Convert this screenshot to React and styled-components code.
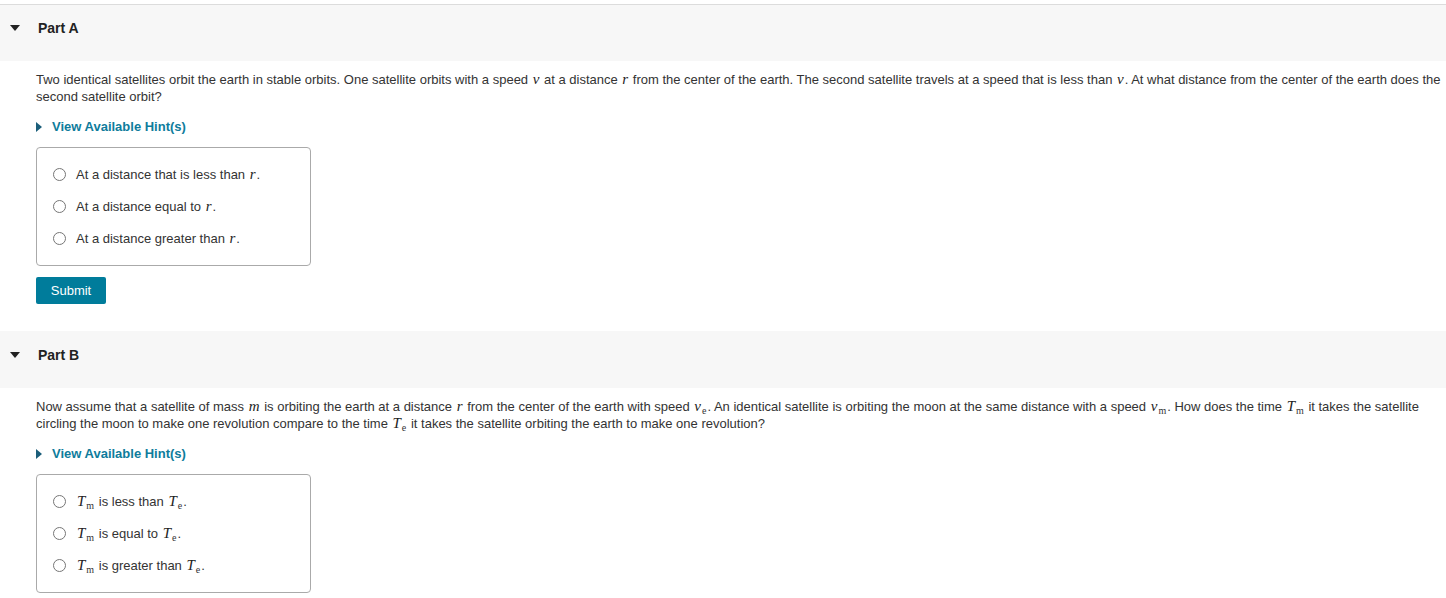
import React from "react"
import styled, { createGlobalStyle } from "styled-components"

const GlobalStyle = createGlobalStyle`
  body {
    margin: 0;
    background: #fff;
    font-family: "Liberation Sans", Arial, sans-serif;
    color: #333;
  }
`

const Page = styled.div`
  padding-top: 4px;
`

const Section = styled.section`
  margin-bottom: 27px;
`

const Header = styled.div`
  display: flex;
  align-items: center;
  height: 57px;
  background: #f7f7f7;
  border-top: ${p => (p.$first ? "1px solid #dcdcdc" : "0")};
  box-sizing: border-box;
  padding-left: 10px;
  padding-bottom: 10px;
`

const Caret = styled.span`
  width: 0;
  height: 0;
  border-left: 5px solid transparent;
  border-right: 5px solid transparent;
  border-top: 6px solid #222;
  margin-right: 18px;
`

const Title = styled.h2`
  margin: 0;
  font-size: 14px;
  font-weight: bold;
  color: #222;
`

const Body = styled.div`
  padding: 11px 4px 0 36px;
`

const Question = styled.p`
  margin: 0;
  font-size: 13px;
  line-height: 16.5px;
  color: #333;
`

const M = styled.i`
  font-family: "Liberation Serif", "Times New Roman", serif;
  font-style: italic;
  font-size: 15px;
  line-height: 0;
  padding: 0 1px;
  color: #222;
`

const Sub = styled.sub`
  font-family: "Liberation Serif", "Times New Roman", serif;
  font-style: normal;
  font-size: 10px;
  vertical-align: -3px;
  line-height: 0;
  margin-right: 1px;
`

const Hint = styled.a`
  display: flex;
  align-items: center;
  margin-top: 13px;
  height: 17px;
  font-size: 13px;
  font-weight: bold;
  color: #0e7c9c;
  text-decoration: none;
  cursor: pointer;
`

const HintCaret = styled.span`
  width: 0;
  height: 0;
  border-top: 5px solid transparent;
  border-bottom: 5px solid transparent;
  border-left: 6px solid #1b5e7a;
  margin-right: 10px;
`

const Choices = styled.div`
  margin-top: 12px;
  width: 275px;
  box-sizing: border-box;
  border: 1px solid #aaa;
  border-radius: 4px;
  padding: 10px 0 11px 16px;
`

const Choice = styled.label`
  display: flex;
  align-items: center;
  height: 32px;
  font-size: 13px;
  color: #333;
  cursor: pointer;
`

const Radio = styled.span`
  width: 11px;
  height: 11px;
  border: 1px solid #767676;
  border-radius: 50%;
  margin-right: 10px;
  flex-shrink: 0;
`

const SubmitButton = styled.button`
  display: block;
  margin-top: 11px;
  width: 70px;
  height: 27px;
  border: 0;
  border-radius: 2px;
  background: #007c9b;
  color: #fff;
  font-family: "Liberation Sans", Arial, sans-serif;
  font-size: 13px;
  cursor: pointer;
`

const Tm = () => <><M>T</M><Sub>m</Sub></>
const Te = () => <><M>T</M><Sub>e</Sub></>

const parts = [
  {
    name: "Part A",
    question: (
      <>
        Two identical satellites orbit the earth in stable orbits. One satellite orbits with a speed <M>v</M> at a distance <M>r</M> from the center of the earth. The second satellite travels at a speed that is less than <M>v</M>. At what distance from the center of the earth does the second satellite orbit?
      </>
    ),
    choices: [
      <>At a distance that is less than <M>r</M>.</>,
      <>At a distance equal to <M>r</M>.</>,
      <>At a distance greater than <M>r</M>.</>,
    ],
    submit: true,
  },
  {
    name: "Part B",
    question: (
      <>
        Now assume that a satellite of mass <M>m</M> is orbiting the earth at a distance <M>r</M> from the center of the earth with speed <M>v</M><Sub>e</Sub>. An identical satellite is orbiting the moon at the same distance with a speed <M>v</M><Sub>m</Sub>. How does the time <Tm /> it takes the satellite circling the moon to make one revolution compare to the time <Te /> it takes the satellite orbiting the earth to make one revolution?
      </>
    ),
    choices: [
      <><Tm /> is less than <Te />.</>,
      <><Tm /> is equal to <Te />.</>,
      <><Tm /> is greater than <Te />.</>,
    ],
  },
]

export default function App() {
  return (
    <>
      <GlobalStyle />
      <Page>
        {parts.map((part, i) => (
          <Section key={part.name}>
            <Header $first={i === 0}>
              <Caret />
              <Title>{part.name}</Title>
            </Header>
            <Body>
              <Question>{part.question}</Question>
              <Hint>
                <HintCaret />
                View Available Hint(s)
              </Hint>
              <Choices>
                {part.choices.map((c, j) => (
                  <Choice key={j}>
                    <Radio />
                    <span>{c}</span>
                  </Choice>
                ))}
              </Choices>
              {part.submit && <SubmitButton>Submit</SubmitButton>}
            </Body>
          </Section>
        ))}
      </Page>
    </>
  )
}
